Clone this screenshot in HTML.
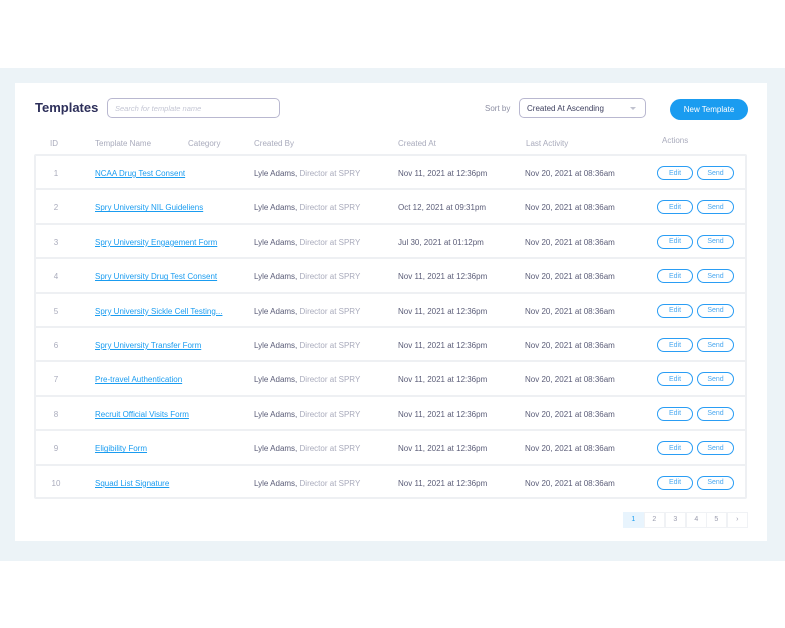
<!DOCTYPE html>
<html><head><meta charset="utf-8"><style>
*{box-sizing:border-box;margin:0;padding:0}
body{width:785px;height:628px;background:#fff;font-family:"Liberation Sans",sans-serif;position:relative;overflow:hidden}
.bg{position:absolute;left:0;top:68px;width:785px;height:493px;background:#ecf3f7}
.card{position:absolute;left:15px;top:83px;width:752px;height:458px;background:#fff}
.a{position:absolute;white-space:nowrap}
.h{font-size:8px;color:#a9abbc;top:139px}
.tbl{position:absolute;left:34px;top:154px;width:713px;height:345px;border:2px solid #eef0f3;border-radius:2px}
.row{position:absolute;left:0;width:709px;height:34.4px;border-bottom:2px solid #eef0f3;font-size:8px}
.row span{position:absolute;top:13px}
.id{left:15px;color:#a9abbc;width:10px;text-align:center}
.nm{left:59px;color:#1a9cf0;text-decoration:underline}
.by{left:218px;color:#5b5d78}
.by i{font-style:normal;color:#a9abbc}
.ca{left:362px;color:#5b5d78}
.la{left:489px;color:#5b5d78}
.btn{position:absolute;top:10px;height:14px;border:1.5px solid #2a9df4;border-radius:8px;font-size:7px;color:#4aa8f0;text-align:center;line-height:8px;padding-top:2.5px}
.pg{position:absolute;top:512px;height:16px;width:20.7px;border:1px solid #f0f2f5;font-size:7px;color:#9a9cae;text-align:center;line-height:14px}
</style></head><body>
<div class="bg"></div>
<div class="card"></div>
<div class="a" style="left:35px;top:100px;font-size:13px;font-weight:bold;color:#2d2f5a">Templates</div>
<div class="a" style="left:107px;top:98px;width:173px;height:20px;border:1.5px solid #b9b8d0;border-radius:5px;font-size:7.5px;font-style:italic;color:#c4c6d4;padding:5px 0 0 7px">Search for template name</div>
<div class="a" style="left:485px;top:104px;font-size:8px;color:#8d8fa3">Sort by</div>
<div class="a" style="left:519px;top:98px;width:127px;height:20px;border:1.5px solid #b9b8d0;border-radius:5px;font-size:8px;color:#3f4160;padding:5px 0 0 7px">Created At Ascending<span style="position:absolute;right:9px;top:8px;width:0;height:0;border-left:3px solid transparent;border-right:3px solid transparent;border-top:3px solid #c0c2cf"></span></div>
<div class="a" style="left:670px;top:99px;width:78px;height:21px;border-radius:11px;background:#1a9cf0;color:#fff;font-size:8px;text-align:center;line-height:21px">New Template</div>
<div class="a h" style="left:50px">ID</div>
<div class="a h" style="left:95px">Template Name</div>
<div class="a h" style="left:188px">Category</div>
<div class="a h" style="left:254px">Created By</div>
<div class="a h" style="left:398px">Created At</div>
<div class="a h" style="left:526px">Last Activity</div>
<div class="a h" style="left:662px;top:136px">Actions</div>
<div class="tbl">
<div class="row" style="top:0"><span class="id">1</span><span class="nm">NCAA Drug Test Consent</span><span class="by">Lyle Adams, <i>Director at SPRY</i></span><span class="ca">Nov 11, 2021 at 12:36pm</span><span class="la">Nov 20, 2021 at 08:36am</span><div class="btn" style="left:621px;width:36px">Edit</div><div class="btn" style="left:661px;width:37px">Send</div></div>
<div class="row" style="top:34.4px"><span class="id">2</span><span class="nm">Spry University NIL Guideliens</span><span class="by">Lyle Adams, <i>Director at SPRY</i></span><span class="ca">Oct 12, 2021 at 09:31pm</span><span class="la">Nov 20, 2021 at 08:36am</span><div class="btn" style="left:621px;width:36px">Edit</div><div class="btn" style="left:661px;width:37px">Send</div></div>
<div class="row" style="top:68.8px"><span class="id">3</span><span class="nm">Spry University Engagement Form</span><span class="by">Lyle Adams, <i>Director at SPRY</i></span><span class="ca">Jul 30, 2021 at 01:12pm</span><span class="la">Nov 20, 2021 at 08:36am</span><div class="btn" style="left:621px;width:36px">Edit</div><div class="btn" style="left:661px;width:37px">Send</div></div>
<div class="row" style="top:103.2px"><span class="id">4</span><span class="nm">Spry University Drug Test Consent</span><span class="by">Lyle Adams, <i>Director at SPRY</i></span><span class="ca">Nov 11, 2021 at 12:36pm</span><span class="la">Nov 20, 2021 at 08:36am</span><div class="btn" style="left:621px;width:36px">Edit</div><div class="btn" style="left:661px;width:37px">Send</div></div>
<div class="row" style="top:137.6px"><span class="id">5</span><span class="nm">Spry University Sickle Cell Testing...</span><span class="by">Lyle Adams, <i>Director at SPRY</i></span><span class="ca">Nov 11, 2021 at 12:36pm</span><span class="la">Nov 20, 2021 at 08:36am</span><div class="btn" style="left:621px;width:36px">Edit</div><div class="btn" style="left:661px;width:37px">Send</div></div>
<div class="row" style="top:172px"><span class="id">6</span><span class="nm">Spry University Transfer Form</span><span class="by">Lyle Adams, <i>Director at SPRY</i></span><span class="ca">Nov 11, 2021 at 12:36pm</span><span class="la">Nov 20, 2021 at 08:36am</span><div class="btn" style="left:621px;width:36px">Edit</div><div class="btn" style="left:661px;width:37px">Send</div></div>
<div class="row" style="top:206.4px"><span class="id">7</span><span class="nm">Pre-travel Authentication</span><span class="by">Lyle Adams, <i>Director at SPRY</i></span><span class="ca">Nov 11, 2021 at 12:36pm</span><span class="la">Nov 20, 2021 at 08:36am</span><div class="btn" style="left:621px;width:36px">Edit</div><div class="btn" style="left:661px;width:37px">Send</div></div>
<div class="row" style="top:240.8px"><span class="id">8</span><span class="nm">Recruit Official Visits Form</span><span class="by">Lyle Adams, <i>Director at SPRY</i></span><span class="ca">Nov 11, 2021 at 12:36pm</span><span class="la">Nov 20, 2021 at 08:36am</span><div class="btn" style="left:621px;width:36px">Edit</div><div class="btn" style="left:661px;width:37px">Send</div></div>
<div class="row" style="top:275.2px"><span class="id">9</span><span class="nm">Eligibility Form</span><span class="by">Lyle Adams, <i>Director at SPRY</i></span><span class="ca">Nov 11, 2021 at 12:36pm</span><span class="la">Nov 20, 2021 at 08:36am</span><div class="btn" style="left:621px;width:36px">Edit</div><div class="btn" style="left:661px;width:37px">Send</div></div>
<div class="row" style="top:309.6px;border-bottom:none"><span class="id">10</span><span class="nm">Squad List Signature</span><span class="by">Lyle Adams, <i>Director at SPRY</i></span><span class="ca">Nov 11, 2021 at 12:36pm</span><span class="la">Nov 20, 2021 at 08:36am</span><div class="btn" style="left:621px;width:36px">Edit</div><div class="btn" style="left:661px;width:37px">Send</div></div>
</div>
<div class="pg" style="left:623px;background:#e8f4fd;color:#1a9cf0;border-color:#e8f4fd">1</div>
<div class="pg" style="left:644px">2</div>
<div class="pg" style="left:665px">3</div>
<div class="pg" style="left:686px">4</div>
<div class="pg" style="left:706px">5</div>
<div class="pg" style="left:727px">›</div>
</body></html>
